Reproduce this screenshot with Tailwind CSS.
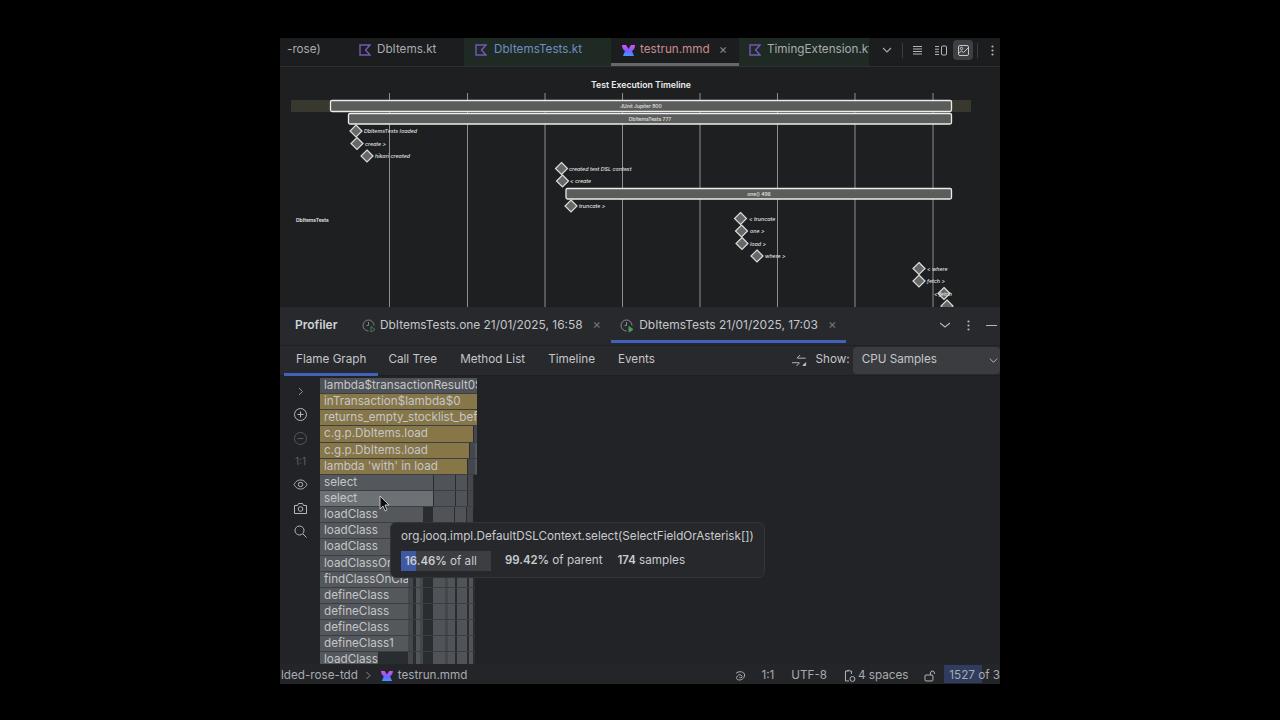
<!DOCTYPE html>
<html lang="en">
<head>
    <meta charset="UTF-8">
    <title>Profiler</title>
    <script src="https://cdn.jsdelivr.net/npm/@tailwindcss/browser@4"></script>
</head>
<body class="bg-black w-[1280px] h-[720px] overflow-hidden font-['Inter',sans-serif]">
    <div class="pt-[38px] pl-[280px]">
        <div class="relative w-[720px] h-[646px] overflow-hidden flex flex-col bg-[#1d1f21]">

            <!-- editor tabs -->
            <div class="h-[29px] shrink-0 flex items-stretch bg-[#1b1d1f] border-b border-[#2c2e30] text-[11.7px] text-[#a9abaf]">
                <div class="w-[69px] pl-[7px] pb-[4px] shrink-0 flex items-center">-rose)</div>
                <div class="w-[115px] pb-[4px] shrink-0 pl-[10px] flex items-center gap-[6px]">
                    <svg class="w-[12px] h-[12px]" viewBox="0 0 12 12" fill="none" stroke="#7458b8" stroke-width="1.4"><path d="M1 1h10L6.500 6 11 11H1z"/></svg>
                    <span>DbItems.kt</span>
                </div>
                <div class="w-[147px] pb-[4px] shrink-0 pl-[11px] flex items-center gap-[7px] bg-[#1f2a24] text-[#6b8fc0]">
                    <svg class="w-[12px] h-[12px]" viewBox="0 0 12 12" fill="none" stroke="#7458b8" stroke-width="1.4"><path d="M1 1h10L6.500 6 11 11H1z"/></svg>
                    <span>DbItemsTests.kt</span>
                </div>
                <div class="relative w-[128px] pb-[4px] shrink-0 pl-[10px] flex items-center gap-[4px] text-[#c98d8f]">
                    <svg class="w-[15px] h-[15px]" viewBox="0 0 15 15"><defs><linearGradient id="mm" x1="0" y1="0" x2="0" y2="1"><stop offset="0" stop-color="#d94ff0"/><stop offset=".55" stop-color="#7a5cff"/><stop offset="1" stop-color="#30a0ff"/></linearGradient></defs><path d="M1 2h4q2 3 2.500 4Q8 5 10 2h4q0 4-3 6l2 5H2l2-5Q1 6 1 2z" fill="url(#mm)"/></svg>
                    <span>testrun.mmd</span>
                    <span class="ml-[5px] text-[#85878a] text-[13px]">×</span>
                    <div class="absolute left-0 right-0 bottom-0 h-[3px] bg-[#66686b]"></div>
                </div>
                <div class="w-[130px] pb-[4px] shrink-0 pl-[10px] flex items-center gap-[6px] bg-[#1f2a24] overflow-hidden whitespace-nowrap">
                    <svg class="w-[12px] h-[12px] shrink-0" viewBox="0 0 12 12" fill="none" stroke="#7458b8" stroke-width="1.4"><path d="M1 1h10L6.500 6 11 11H1z"/></svg>
                    <span>TimingExtension.kt</span>
                </div>
                <div class="flex items-center pb-[4px]">
                    <svg class="ml-[13px] w-[10px] h-[10px]" viewBox="0 0 10 10" fill="none" stroke="#a9abaf" stroke-width="1.100"><path d="M1 3l4 4 4-4"/></svg>
                    <div class="ml-[10px] w-px h-[15px] bg-[#3a3c3f]"></div>
                    <svg class="ml-[9px] w-[11px] h-[11px]" viewBox="0 0 11 11" stroke="#b4b6ba" fill="none"><path d="M1 1.500h9M1 4h9M1 6.500h9M1 9h9"/></svg>
                    <svg class="ml-[12px] w-[12px] h-[11px]" viewBox="0 0 12 11" stroke="#b4b6ba" fill="none"><path d="M0 1.500h4M0 4.200h4M0 6.900h4M0 9.500h4"/><rect x="6.500" y="1" width="5" height="9" rx="1"/></svg>
                    <div class="ml-[6px] w-[20px] h-[20px] rounded-[4px] bg-[#3d3f42] flex items-center justify-center">
                        <svg class="w-[11px] h-[11px]" viewBox="0 0 11 11" stroke="#c4c6ca" fill="none"><rect x=".5" y=".5" width="10" height="10" rx="1.500"/><circle cx="3.500" cy="3.500" r="1.200"/><path d="M.5 8l3-2 2 1.500L10 3"/></svg>
                    </div>
                    <div class="ml-[4px] w-px h-[15px] bg-[#3a3c3f]"></div>
                    <svg class="ml-[13px] w-[3px] h-[11px]" viewBox="0 0 3 11" fill="#b4b6ba"><circle cx="1.500" cy="1.500" r="1.100"/><circle cx="1.500" cy="5.500" r="1.100"/><circle cx="1.500" cy="9.500" r="1.100"/></svg>
                </div>
            </div>

            <!-- mermaid preview -->
            <div class="h-[240px] shrink-0 overflow-hidden">
                <svg class="block" width="720" height="240" viewBox="280 67 720 240" font-family="Inter, sans-serif">
                    <text x="641" y="88" fill="#ececec" font-size="8.700" font-weight="600" text-anchor="middle">Test Execution Timeline</text>
                    <g stroke="#8c8e8f" stroke-width="1">
                        <path d="M389.500 93v214M467.500 93v214M545 93v214M622.500 93v214M700 93v214M777.500 93v214M855 93v214M933 93v214"/>
                    </g>
                    <rect x="291" y="100" width="680" height="12" fill="#38382e"/>
                    <g fill="#5b5d5a" stroke="#ececec" stroke-width="1.300">
                        <rect x="330.500" y="100.500" width="621" height="11" rx="1.500"/>
                        <rect x="348.500" y="113.500" width="603" height="10.500" rx="1.500"/>
                        <rect x="566" y="188.500" width="385.500" height="10.500" rx="1.500"/>
                    </g>
                    <g fill="#e4e4e4" font-size="5" font-weight="500" text-anchor="middle">
                        <text x="641" y="107.500">JUnit Jupiter 800</text>
                        <text x="650" y="120.500">DbItemsTests 777</text>
                        <text x="759" y="195.500">one() 496</text>
                    </g>
                    <text x="296" y="221.500" fill="#eaeaea" font-size="5" font-weight="600">DbItemsTests</text>
                    <g fill="#666866" stroke="#dcdcdc" stroke-width="1.200">
                        <path d="M356 125l6 6-6 6-6-6z"/>
                        <path d="M357 137.500l6 6-6 6-6-6z"/>
                        <path d="M367 150l6 6-6 6-6-6z"/>
                        <path d="M561.500 162.500l6 6-6 6-6-6z"/>
                        <path d="M562.500 175l6 6-6 6-6-6z"/>
                        <path d="M571 200l6 6-6 6-6-6z"/>
                        <path d="M740.500 212.500l6 6-6 6-6-6z"/>
                        <path d="M741.500 225l6 6-6 6-6-6z"/>
                        <path d="M742 237.500l6 6-6 6-6-6z"/>
                        <path d="M757 250l6 6-6 6-6-6z"/>
                        <path d="M919 262.500l6 6-6 6-6-6z"/>
                        <path d="M919 275l6 6-6 6-6-6z"/>
                        <path d="M944 287.500l6 6-6 6-6-6z"/>
                        <path d="M947 300l6 6-6 6-6-6z"/>
                    </g>
                    <g fill="#e0e0e0" font-size="5.300" font-weight="500" font-style="italic">
                        <text x="364" y="133">DbItemsTests loaded</text>
                        <text x="365" y="145.500">create &gt;</text>
                        <text x="375" y="158">hikari created</text>
                        <text x="569" y="170.500">created test DSL context</text>
                        <text x="570" y="183">&lt; create</text>
                        <text x="579" y="208">truncate &gt;</text>
                        <text x="749" y="220.500">&lt; truncate</text>
                        <text x="750" y="233">one &gt;</text>
                        <text x="750" y="245.500">load &gt;</text>
                        <text x="765" y="258">where &gt;</text>
                        <text x="927" y="270.500">&lt; where</text>
                        <text x="927" y="283">fetch &gt;</text>
                        <text x="934" y="295.500">&lt; fetch</text>
                    </g>
                </svg>
            </div>

            <!-- profiler header -->
            <div class="h-[38px] shrink-0 flex items-center pb-[2px] bg-[#27292c] text-[12px] text-[#c4c6c9] whitespace-nowrap">
                <div class="w-[81px] pl-[15px] font-semibold text-[#d0d2d5]">Profiler</div>
                <svg class="w-[15px] h-[15px]" viewBox="0 0 15 15" fill="none" stroke="#7d8084"><path d="M13 7.500a5.500 5.500 0 1 0-5.500 5.500M7.500 4v3.500h-2"/><path d="M10 8.500l4 3-4 2.500z" stroke="#4d7a4f"/></svg>
                <span class="ml-[4px] text-[11.9px]">DbItemsTests.one 21/01/2025, 16:58</span>
                <span class="ml-[10px] text-[#75777a] text-[13px]">×</span>
                <svg class="ml-[18px] w-[15px] h-[15px]" viewBox="0 0 15 15" fill="none" stroke="#8a8d90"><path d="M13 7.500a5.500 5.500 0 1 0-5.500 5.500M7.500 4v3.500h-2"/><path d="M10 8.500l4 3-4 2.500z" fill="#4e9a52" stroke="#4e9a52"/></svg>
                <span class="ml-[5px]">DbItemsTests 21/01/2025, 17:03</span>
                <span class="ml-[10px] text-[#75777a] text-[13px]">×</span>
                <svg class="ml-[103px] w-[10px] h-[10px]" viewBox="0 0 10 10" fill="none" stroke="#b4b6ba" stroke-width="1.100"><path d="M0 3l5 4 5-4"/></svg>
                <svg class="ml-[17px] w-[3px] h-[11px]" viewBox="0 0 3 11" fill="#b4b6ba"><circle cx="1.500" cy="1.500" r="1.100"/><circle cx="1.500" cy="5.500" r="1.100"/><circle cx="1.500" cy="9.500" r="1.100"/></svg>
                <div class="ml-[16px] w-[11px] h-px bg-[#b4b6ba]"></div>
                <div class="absolute left-[331px] top-[302px] w-[235px] h-[3px] bg-[#3f63b8]"></div>
            </div>

            <!-- profiler tabs -->
            <div class="relative h-[31px] shrink-0 flex items-center pb-[1px] bg-[#27292c] border-t border-b border-[#1e2022] text-[11.7px] text-[#c4c6c9] whitespace-nowrap">
                <span class="ml-[16px]">Flame Graph</span>
                <span class="ml-[22px]">Call Tree</span>
                <span class="ml-[23px]">Method List</span>
                <span class="ml-[23px]">Timeline</span>
                <span class="ml-[23px]">Events</span>
                <svg class="ml-[136px] w-[17px] h-[16px]" viewBox="0 0 17 16" fill="none" stroke="#c0c2c6"><path d="M7 6h9M10 2.500L6.500 6M1 11h8M6 14.500L9.500 11"/><path d="M13 14l3-3v3z" fill="#c0c2c6"/></svg>
                <span class="ml-[9px]">Show:</span>
                <div class="ml-[3px] w-[160px] h-[27px] rounded-[4px] bg-[#3a3c3f] flex items-center justify-between pl-[9px] pr-[2px]">
                    <span>CPU Samples</span>
                    <svg class="w-[9px] h-[9px]" viewBox="0 0 10 10" fill="none" stroke="#b4b6ba" stroke-width="1.100"><path d="M1 3l4 4 4-4"/></svg>
                </div>
                <div class="absolute left-[4px] bottom-[-1px] w-[94px] h-[3px] bg-[#3f63b8]"></div>
            </div>

            <!-- flame graph area -->
            <div class="flex-1 flex min-h-0 bg-[#212326]">
                <div class="w-[39px] shrink-0 flex flex-col items-center gap-[8.350px] pt-[8px] ml-[1px]">
                    <svg class="w-[15px] h-[15px]" viewBox="0 0 15 15" fill="none" stroke="#8d9094"><path d="M6 4l3.500 3.500L6 11"/></svg>
                    <svg class="w-[15px] h-[15px]" viewBox="0 0 15 15" fill="none" stroke="#b4b6ba"><circle cx="7.500" cy="7.500" r="6"/><path d="M4.500 7.500h6M7.500 4.500v6"/></svg>
                    <svg class="w-[15px] h-[15px]" viewBox="0 0 15 15" fill="none" stroke="#55575a"><circle cx="7.500" cy="7.500" r="6"/><path d="M4.500 7.500h6"/></svg>
                    <span class="h-[15px] text-[10px] leading-[15px] text-[#5f6164]">1:1</span>
                    <svg class="w-[15px] h-[15px]" viewBox="0 0 15 15" fill="none" stroke="#b4b6ba"><path d="M1 7.500C3 4 5 3 7.500 3S12 4 14 7.500C12 11 10 12 7.500 12S3 11 1 7.500z"/><circle cx="7.500" cy="7.500" r="2.200"/></svg>
                    <svg class="w-[15px] h-[15px]" viewBox="0 0 15 15" fill="none" stroke="#b4b6ba"><path d="M1.500 4.500h3l1-2h4l1 2h3v8h-12z"/><circle cx="7.500" cy="8" r="2.300"/></svg>
                    <svg class="w-[15px] h-[15px]" viewBox="0 0 15 15" fill="none" stroke="#b4b6ba"><circle cx="6.500" cy="6.500" r="4.500"/><path d="M10 10l3.500 3.500"/></svg>
                </div>
                <div id="flame" class="w-[160px] pt-[2px] overflow-hidden text-[11.7px] text-[#c4c6c9]"></div>
            </div>

            <!-- status bar -->
            <div class="h-[20px] shrink-0 flex items-center pt-[3px] bg-[#232528] text-[11.7px] text-[#a9abaf] whitespace-nowrap">
                <span class="ml-[1px]">lded-rose-tdd</span>
                <svg class="ml-[7px] w-[7px] h-[9px]" viewBox="0 0 7 9" fill="none" stroke="#8d9094"><path d="M1.500 1l3.500 3.500L1.500 8"/></svg>
                <svg class="ml-[8px] w-[14px] h-[14px]" viewBox="0 0 15 15"><path d="M1 2h4q2 3 2.500 4Q8 5 10 2h4q0 4-3 6l2 5H2l2-5Q1 6 1 2z" fill="url(#mm)"/></svg>
                <span class="ml-[4px]">testrun.mmd</span>
                <svg class="ml-[267px] w-[12px] h-[12px]" viewBox="0 0 12 12" fill="none" stroke="#b4b6ba"><path d="M2 3.500C4 1 9 1 10.500 4c1 3-2 6-5 6S2 8 3.500 6 7 4.500 8 6 6.500 8 5.500 7.500"/></svg>
                <span class="ml-[15px]">1:1</span>
                <span class="ml-[17px]">UTF-8</span>
                <svg class="ml-[16px] w-[13px] h-[14px]" viewBox="0 0 13 14" fill="none" stroke="#b4b6ba"><path d="M6 2H2.500v10H6M4 2c0-1 3-1 3 0M7 2h1.500v3"/><circle cx="9.500" cy="10" r="2.500"/></svg>
                <span class="ml-[2px]">4 spaces</span>
                <svg class="ml-[16px] w-[13px] h-[12px]" viewBox="0 0 13 12" fill="none" stroke="#b4b6ba"><rect x="1" y="5" width="8" height="6" rx="1"/><path d="M6.500 5V3a2 2 0 0 1 4 0v1"/></svg>
                <div class="relative ml-[12px]">
                    <div class="absolute left-[-5px] top-[-2px] w-[38px] h-[18px] bg-[#2f3c5e]"></div>
                    <span class="relative">1527 of 3</span>
                </div>
            </div>

            <!-- tooltip -->
            <div class="absolute left-[110px] top-[484px] w-[375px] h-[56px] rounded-[6px] bg-[#26282b] border border-[#333538] pl-[10px] pt-[4px] text-[11.7px] text-[#c9cbce] whitespace-nowrap">
                <div class="h-[18px] leading-[18px]">org.jooq.impl.DefaultDSLContext.select(SelectFieldOrAsterisk[])</div>
                <div class="flex items-center mt-[6px] h-[20px]">
                    <div class="relative w-[90px] h-[20px] leading-[20px] bg-[#3c3e41]">
                        <div class="absolute left-0 top-0 bottom-0 w-[15px] bg-[#3f5aa5]"></div>
                        <span class="relative pl-[4px]"><b class="font-semibold text-[11.4px]">16.46%</b> of all</span>
                    </div>
                    <span class="ml-[14px]"><b class="font-semibold text-[11.4px]">99.42%</b> of parent</span>
                    <span class="ml-[15px]"><b class="font-semibold text-[11.4px]">174</b> samples</span>
                </div>
            </div>

            <!-- mouse cursor -->
            <svg class="absolute left-[99px] top-[457px] w-[12px] h-[17px]" viewBox="0 0 12 17"><path d="M1 1v13l3-3 2 5 2-1-2-5h4z" fill="#111" stroke="#ddd" stroke-width=".8"/></svg>
        </div>
    </div>

    <script>
        // each row: label, then [width, colour] segments
        const gold = 'bg-[#877648]', grey = 'bg-[#54585c]', mid = 'bg-[#505458]', dim = 'bg-[#44474b]', dark = 'bg-[#2a2d2f]', hot = 'bg-[#6c7175]';
        const selectRest = [[1, dark], [21, mid], [1, dark], [11, mid], [1, dark], [5, dim], [1, dark]];
        const loadRest = [[10, dark], [21, mid], [1, dark], [11, mid], [1, dark], [6, dim]];
        const defineRest = [[5, dim], [3, dark], [4, mid], [3, dim], [10, dark], [12, mid], [3, dim], [7, mid], [2, dark], [10, mid], [2, dark], [4, mid], [2, dark]];
        const rows = [
            ['lambda$transactionResult0$', [[157, 'bg-[#4e5257]']]],
            ['inTransaction$lambda$0', [[157, gold]]],
            ['returns_empty_stocklist_before', [[157, gold]]],
            ['c.g.p.DbItems.load', [[153, gold], [1, dark], [3, dim]]],
            ['c.g.p.DbItems.load', [[149, gold], [1, dark], [5, dim], [2, grey]]],
            ['lambda \'with\' in load', [[147, gold], [1, dark], [7, dim], [2, grey]]],
            ['select', [[113, grey], ...selectRest]],
            ['select', [[113, hot], ...selectRest]],
            ['loadClass', [[103, grey], ...loadRest]],
            ['loadClass', [[103, grey], ...loadRest]],
            ['loadClass', [[103, grey], ...loadRest]],
            ['loadClassOrNull', [[103, grey], ...loadRest]],
            ['findClassOnClassPath', [[88, grey], ...defineRest]],
            ['defineClass', [[88, grey], ...defineRest]],
            ['defineClass', [[88, grey], ...defineRest]],
            ['defineClass', [[88, grey], ...defineRest]],
            ['defineClass1', [[88, grey], ...defineRest]],
            ['loadClass', [[58, grey], [30, dark], ...defineRest]]
        ];
        const flame = document.getElementById('flame');
        rows.forEach(([label, segments]) => {
            const row = document.createElement('div');
            row.className = 'relative flex w-fit h-[16.15px] border-b border-[#3c3f42]';
            segments.forEach(([width, colour]) => {
                const seg = document.createElement('div');
                seg.className = 'h-full shrink-0 ' + colour;
                seg.style.width = width + 'px';
                row.appendChild(seg);
            });
            const text = document.createElement('span');
            text.className = 'absolute left-[4px] top-0 overflow-hidden whitespace-nowrap leading-[15px]';
            // clip the label to the frame it sits on
            text.style.width = (segments[0][0] - 4) + 'px';
            text.textContent = label;
            row.appendChild(text);
            flame.appendChild(row);
        });
    </script>
</body>
</html>
